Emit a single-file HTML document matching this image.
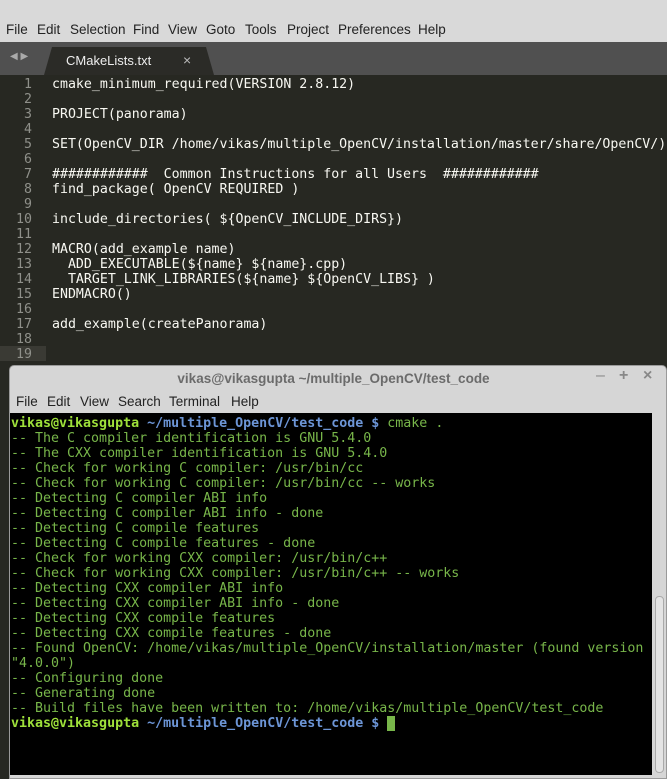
<!DOCTYPE html>
<html><head><meta charset="utf-8"><style>
*{margin:0;padding:0;box-sizing:border-box}
body{width:667px;height:779px;overflow:hidden;background:#272822;position:relative;font-family:"Liberation Sans",sans-serif}
.menu{position:absolute;left:0;top:0;width:667px;height:42px;background:#d9d9d9;font-size:13.5px;color:#222}
.menu span{position:absolute;top:22px}
.tabs{position:absolute;left:0;top:42px;width:667px;height:33px;background:#505050}
.tab{position:absolute;left:44px;top:5px;width:170px;height:28px;background:#2b2b27;clip-path:polygon(8px 0,162px 0,170px 28px,0 28px)}
.code{position:absolute;left:0;top:77px;font-family:"DejaVu Sans Mono",monospace;font-size:13.25px;line-height:15px;color:#f8f8f2;white-space:pre}
.ln{position:absolute;left:0;width:32px;text-align:right;color:#8f908a}
.tx{position:absolute;left:52px}
.term{position:absolute;left:9px;top:365px;width:658px;height:414px;background:#d6d6d6;border:1px solid #9a9a9a;border-radius:5px 5px 0 0}
.tbody{position:absolute;left:10px;top:413px;width:642px;height:362px;background:#000}
.tt{position:absolute;left:11px;top:416px;font-family:"DejaVu Sans Mono",monospace;font-size:13.3px;line-height:15px;color:#78b64a;white-space:pre}
.u{color:#9ee03a;font-weight:bold}.p{color:#6c95d6;font-weight:bold}
</style></head><body>
<div class="menu"><span style="left:6px">File</span><span style="left:37px">Edit</span><span style="left:70px">Selection</span><span style="left:133px">Find</span><span style="left:168px">View</span><span style="left:206px">Goto</span><span style="left:245px">Tools</span><span style="left:287px">Project</span><span style="left:338px">Preferences</span><span style="left:418px">Help</span></div>
<div class="tabs"><span style="position:absolute;left:10px;top:9px;color:#aaa;font-size:10px">◀ ▶</span><div class="tab"></div><span style="position:absolute;left:66px;top:11px;color:#eee;font-size:13px">CMakeLists.txt</span><span style="position:absolute;left:183px;top:10px;color:#bbb;font-size:14px">×</span></div>
<div class="code">
<div class="ln" style="top:0">1</div><div class="tx" style="top:0">cmake_minimum_required(VERSION 2.8.12)</div>
<div class="ln" style="top:15px">2</div>
<div class="ln" style="top:30px">3</div><div class="tx" style="top:30px">PROJECT(panorama)</div>
<div class="ln" style="top:45px">4</div>
<div class="ln" style="top:60px">5</div><div class="tx" style="top:60px">SET(OpenCV_DIR /home/vikas/multiple_OpenCV/installation/master/share/OpenCV/)</div>
<div class="ln" style="top:75px">6</div>
<div class="ln" style="top:90px">7</div><div class="tx" style="top:90px">############  Common Instructions for all Users  ############</div>
<div class="ln" style="top:105px">8</div><div class="tx" style="top:105px">find_package( OpenCV REQUIRED )</div>
<div class="ln" style="top:120px">9</div>
<div class="ln" style="top:135px">10</div><div class="tx" style="top:135px">include_directories( ${OpenCV_INCLUDE_DIRS})</div>
<div class="ln" style="top:150px">11</div>
<div class="ln" style="top:165px">12</div><div class="tx" style="top:165px">MACRO(add_example name)</div>
<div class="ln" style="top:180px">13</div><div class="tx" style="top:180px">  ADD_EXECUTABLE(${name} ${name}.cpp)</div>
<div class="ln" style="top:195px">14</div><div class="tx" style="top:195px">  TARGET_LINK_LIBRARIES(${name} ${OpenCV_LIBS} )</div>
<div class="ln" style="top:210px">15</div><div class="tx" style="top:210px">ENDMACRO()</div>
<div class="ln" style="top:225px">16</div>
<div class="ln" style="top:240px">17</div><div class="tx" style="top:240px">add_example(createPanorama)</div>
<div class="ln" style="top:255px">18</div>
<div style="position:absolute;left:0;top:269px;width:46px;height:15px;background:#3a3a34"></div><div class="ln" style="top:270px">19</div>
</div>
<div class="term"></div>
<div style="position:absolute;left:0;width:667px;top:371px;text-align:center;font-size:13.5px;font-weight:bold;color:#6b6b6b">vikas@vikasgupta ~/multiple_OpenCV/test_code</div>
<div style="position:absolute;left:596px;top:367px;font-size:16px;color:#888">–</div>
<div style="position:absolute;left:619px;top:367px;font-size:16px;color:#888;font-weight:bold">+</div>
<div style="position:absolute;left:643px;top:367px;font-size:16px;color:#888;font-weight:bold">×</div>
<div style="position:absolute;top:394px;font-size:13.5px;color:#222;left:0;width:300px"><span style="position:absolute;left:16px">File</span><span style="position:absolute;left:47px">Edit</span><span style="position:absolute;left:80px">View</span><span style="position:absolute;left:118px">Search</span><span style="position:absolute;left:169px">Terminal</span><span style="position:absolute;left:231px">Help</span></div>
<div class="tbody"></div>
<div style="position:absolute;left:655px;top:596px;width:9px;height:177px;border:1px solid #aaa;border-radius:4px;background:#e4e4e4"></div>
<div class="tt"><span class="u">vikas@vikasgupta</span> <span class="p">~/multiple_OpenCV/test_code $</span> cmake .
-- The C compiler identification is GNU 5.4.0
-- The CXX compiler identification is GNU 5.4.0
-- Check for working C compiler: /usr/bin/cc
-- Check for working C compiler: /usr/bin/cc -- works
-- Detecting C compiler ABI info
-- Detecting C compiler ABI info - done
-- Detecting C compile features
-- Detecting C compile features - done
-- Check for working CXX compiler: /usr/bin/c++
-- Check for working CXX compiler: /usr/bin/c++ -- works
-- Detecting CXX compiler ABI info
-- Detecting CXX compiler ABI info - done
-- Detecting CXX compile features
-- Detecting CXX compile features - done
-- Found OpenCV: /home/vikas/multiple_OpenCV/installation/master (found version
"4.0.0")
-- Configuring done
-- Generating done
-- Build files have been written to: /home/vikas/multiple_OpenCV/test_code
<span class="u">vikas@vikasgupta</span> <span class="p">~/multiple_OpenCV/test_code $</span> <span style="background:#78b64a">&nbsp;</span></div>
</body></html>
